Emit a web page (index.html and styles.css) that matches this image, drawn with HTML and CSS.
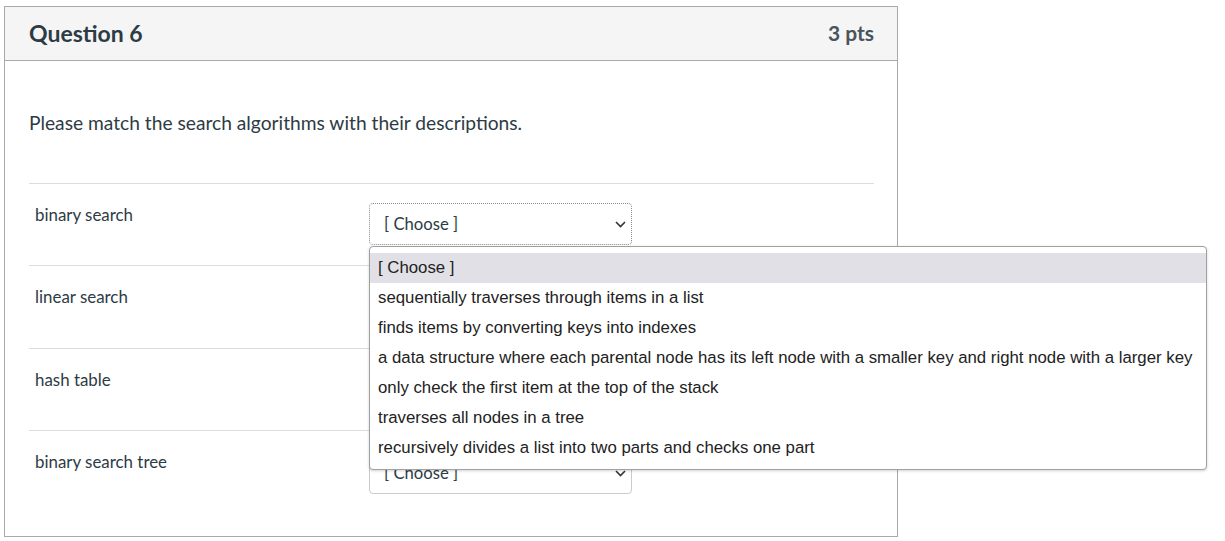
FILE: index.html
```html
<!DOCTYPE html>
<html lang="en">
<head>
<meta charset="utf-8">
<title>Question 6</title>
<link rel="stylesheet" href="styles.css">
</head>
<body>
<div class="question">
  <div class="q-header">
    <h2 class="q-title">Question 6</h2>
    <span class="q-points">3 pts</span>
  </div>
  <div class="q-body">
    <p class="q-text">Please match the search algorithms with their descriptions.</p>
    <div class="answers">
      <div class="answer-row">
        <div class="answer-label">binary search</div>
        <div class="select-wrap">
          <div class="select focused">
            <span class="select-value">[ Choose ]</span>
            <svg class="chev" width="11" height="7" viewBox="0 0 11 7"><path d="M1 1l4.5 4.5L10 1" fill="none" stroke="#333" stroke-width="1.6"/></svg>
          </div>
          <ul class="dropdown">
            <li class="opt active">[ Choose ]</li>
            <li class="opt">sequentially traverses through items in a list</li>
            <li class="opt">finds items by converting keys into indexes</li>
            <li class="opt">a data structure where each parental node has its left node with a smaller key and right node with a larger key</li>
            <li class="opt">only check the first item at the top of the stack</li>
            <li class="opt">traverses all nodes in a tree</li>
            <li class="opt">recursively divides a list into two parts and checks one part</li>
          </ul>
        </div>
      </div>
      <div class="answer-row row-2">
        <div class="answer-label">linear search</div>
        <div class="select-wrap">
          <div class="select">
            <span class="select-value">[ Choose ]</span>
            <svg class="chev" width="11" height="7" viewBox="0 0 11 7"><path d="M1 1l4.5 4.5L10 1" fill="none" stroke="#333" stroke-width="1.6"/></svg>
          </div>
        </div>
      </div>
      <div class="answer-row">
        <div class="answer-label">hash table</div>
        <div class="select-wrap">
          <div class="select">
            <span class="select-value">[ Choose ]</span>
            <svg class="chev" width="11" height="7" viewBox="0 0 11 7"><path d="M1 1l4.5 4.5L10 1" fill="none" stroke="#333" stroke-width="1.6"/></svg>
          </div>
        </div>
      </div>
      <div class="answer-row row-last">
        <div class="answer-label">binary search tree</div>
        <div class="select-wrap">
          <div class="select">
            <span class="select-value">[ Choose ]</span>
            <svg class="chev" width="11" height="7" viewBox="0 0 11 7"><path d="M1 1l4.5 4.5L10 1" fill="none" stroke="#333" stroke-width="1.6"/></svg>
          </div>
        </div>
      </div>
    </div>
  </div>
</div>
</body>
</html>
```
FILE: styles.css
```css
* { box-sizing: border-box; }
body {
  margin: 0;
  background: #fff;
  font-family: Lato, "Open Sans", sans-serif;
  color: #2d3b45;
}
.question {
  margin: 6px 0 0 4px;
  width: 894px;
  border: 1px solid #a9a9a9;
}
.q-header {
  height: 54px;
  background: #f5f5f5;
  border-bottom: 1px solid #a9a9a9;
  display: flex;
  align-items: center;
  justify-content: space-between;
  padding: 0 23px 2px 24px;
}
.q-title {
  margin: 0;
  font-size: 23px;
  font-weight: 700;
  color: #2d3b45;
}
.q-points {
  font-size: 21px;
  font-weight: 700;
  color: #4a545c;
}
.q-body {
  padding: 0 23px 22px 24px;
}
.q-text {
  margin: 0;
  padding: 48px 0 47px;
  font-size: 19.2px;
  line-height: 27px;
}
.answers {
  border-top: 1px solid #dcdcdc;
}
.answer-row {
  display: flex;
  align-items: flex-start;
  padding: 19px 0 20px 6px;
  border-top: 1px solid #dcdcdc;
}
.answer-row:first-child { border-top: 0; }
.row-2 { padding-bottom: 21px; }
.row-last .select-wrap { margin-top: 2px; }
.answer-label {
  flex: 0 0 334px;
  font-size: 16.9px;
  line-height: 24px;
  color: #2d3b45;
}
.select-wrap {
  position: relative;
}
.select {
  width: 263px;
  height: 42px;
  border: 1px solid #c7cdd1;
  border-radius: 4px;
  display: flex;
  align-items: center;
  justify-content: space-between;
  padding: 0 5px 0 14px;
  font-size: 16.7px;
  color: #2d3b45;
  background: #fff;
}
.select.focused {
  border: 1px dotted #8a8a8a;
}
.chev { display: block; }
.dropdown {
  position: absolute;
  top: 43px;
  left: 0;
  margin: 0;
  list-style: none;
  padding: 6px 14px 6px 0;
  background: #fff;
  border: 1px solid #a0a0a0;
  border-radius: 4px;
  box-shadow: 0 1px 3px rgba(0,0,0,0.18);
  width: max-content;
  z-index: 10;
  font-family: "Liberation Sans", Arial, sans-serif;
  font-size: 16.8px;
  color: #222;
}
.opt {
  height: 30px;
  line-height: 30px;
  padding-left: 8px;
  white-space: nowrap;
}
.opt.active {
  background: #e0e0e6;
  margin-right: -14px;
}
```
